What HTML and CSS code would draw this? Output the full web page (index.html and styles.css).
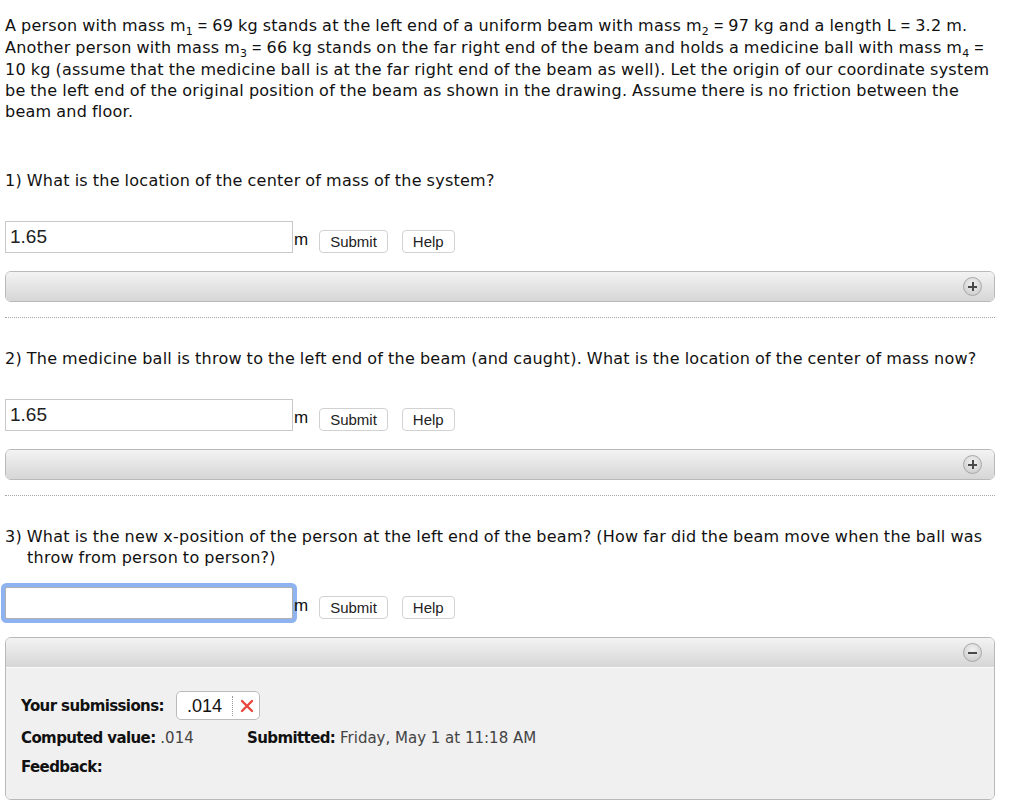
FILE: index.html
```html
<!DOCTYPE html>
<html lang="en">
<head>
    <meta charset="UTF-8">
    <title>Center of Mass Problem</title>
    <link rel="stylesheet" href="styles.css">
</head>
<body>
    <div class="problem">
        <p class="intro">A person with mass m<sub>1</sub> <span class="eq">=</span> 69 kg stands at the left end of a uniform beam with mass m<sub>2</sub> <span class="eq">=</span> 97 kg and a length L <span class="eq">=</span> 3.2 m. Another person with mass m<sub>3</sub> <span class="eq">=</span> 66 kg stands on the far right end of the beam and holds a medicine ball with mass m<sub>4</sub> <span class="eq">=</span> 10 kg (assume that the medicine ball is at the far right end of the beam as well). Let the origin of our coordinate system be the left end of the original position of the beam as shown in the drawing. Assume there is no friction between the beam and floor.</p>

        <div class="question first">
            <p class="q-text">1) What is the location of the center of mass of the system?</p>
            <div class="answer-row">
                <input type="text" class="answer-input" value="1.65">
                <span class="unit">m</span>
                <button class="btn">Submit</button>
                <button class="btn">Help</button>
            </div>
            <div class="panel">
                <div class="panel-head">
                    <span class="toggle plus"></span>
                </div>
            </div>
            <hr class="divider">
        </div>

        <div class="question">
            <p class="q-text">2) The medicine ball is throw to the left end of the beam (and caught). What is the location of the center of mass now?</p>
            <div class="answer-row">
                <input type="text" class="answer-input" value="1.65">
                <span class="unit">m</span>
                <button class="btn">Submit</button>
                <button class="btn">Help</button>
            </div>
            <div class="panel">
                <div class="panel-head">
                    <span class="toggle plus"></span>
                </div>
            </div>
            <hr class="divider">
        </div>

        <div class="question last">
            <p class="q-text">3) What is the new x-position of the person at the left end of the beam? (How far did the beam move when the ball was throw from person to person?)</p>
            <div class="answer-row">
                <input type="text" class="answer-input focused" value="">
                <span class="unit">m</span>
                <button class="btn">Submit</button>
                <button class="btn">Help</button>
            </div>
            <div class="panel open">
                <div class="panel-head">
                    <span class="toggle minus"></span>
                </div>
                <div class="panel-body">
                    <div class="sub-row">
                        <strong>Your submissions:</strong>
                        <span class="sub-box">
                            <span class="sub-val">.014</span>
                            <svg class="sub-x" width="14" height="14" viewBox="0 0 14 14">
                                <path d="M2 2 L12 12 M12 2 L2 12" stroke="#e8453c" stroke-width="2.4" stroke-linecap="round"/>
                            </svg>
                        </span>
                    </div>
                    <div class="info-row">
                        <span class="computed"><strong>Computed value:</strong> .014</span>
                        <span><strong>Submitted:</strong> Friday, May 1 at 11:18 AM</span>
                    </div>
                    <div class="info-row">
                        <strong>Feedback:</strong>
                    </div>
                </div>
            </div>
        </div>
    </div>
</body>
</html>
```

FILE: styles.css
```css
body {
    margin: 0;
    background: #fff;
    color: #111;
    font-family: "DejaVu Sans", Verdana, sans-serif;
    font-size: 16px;
    letter-spacing: 0.25px;
    word-spacing: -0.5px;
}
.problem {
    width: 992px;
    padding: 15px 0 0 5px;
}
.intro {
    margin: 0;
    line-height: 21px;
}
.eq {
    font-family: "Liberation Sans", Arial, sans-serif;
}
sub {
    font-size: 11px;
    vertical-align: sub;
    line-height: 1;
}
.q-text {
    margin: 30px 0 0;
    line-height: 21px;
    padding-left: 22px;
    text-indent: -22px;
}
.question.first .q-text {
    margin-top: 48px;
}
.answer-row {
    display: flex;
    align-items: flex-end;
    margin-top: 30px;
    height: 32px;
    letter-spacing: 0;
    word-spacing: 0;
}
.question.last .answer-row {
    margin-top: 19px;
}
.answer-input {
    box-sizing: border-box;
    width: 288px;
    height: 32px;
    margin: 0;
    padding: 0 4px;
    border: 1px solid #c8c8c8;
    font-family: "Liberation Sans", Arial, sans-serif;
    font-size: 19px;
    color: #222;
    outline: none;
}
.answer-input.focused {
    border: 1px solid #b0b0b0;
    box-shadow: 0 0 0 4px #8fb2f0;
    border-radius: 2px;
}
.unit {
    font-family: "Liberation Sans", Arial, sans-serif;
    font-size: 17px;
    margin-left: 1px;
    line-height: 26px;
}
.btn {
    margin-left: 11px;
    height: 23px;
    padding: 0 10px;
    background: #fff;
    border: 1px solid #d2d2d2;
    border-radius: 4px;
    font-family: "Liberation Sans", Arial, sans-serif;
    font-size: 15px;
    color: #222;
}
.btn + .btn {
    margin-left: 14px;
}
.panel {
    width: 990px;
    box-sizing: border-box;
    margin-top: 18px;
    border: 1px solid #b9b9b9;
    border-radius: 6px;
    overflow: hidden;
}
.panel-head {
    height: 29px;
    display: flex;
    justify-content: flex-end;
    align-items: center;
    padding-right: 12px;
    background: linear-gradient(#f3f3f3, #d6d6d6);
}
.toggle {
    position: relative;
    box-sizing: border-box;
    width: 19px;
    height: 19px;
    border-radius: 50%;
    border: 1px solid #a8a8a8;
    background: radial-gradient(circle at 50% 35%, #f2f2f2, #c6c6c6);
}
.toggle::before,
.toggle.plus::after {
    content: "";
    position: absolute;
    left: 4px;
    top: 7.5px;
    width: 9px;
    height: 2px;
    background: #4a4a4a;
}
.toggle.plus::after {
    left: 7.5px;
    top: 4px;
    width: 2px;
    height: 9px;
}
.divider {
    width: 990px;
    margin: 15px 0 0;
    border: none;
    border-top: 1px dotted #a8a8a8;
}
.panel.open .panel-head {
    border-bottom: 1px solid #fafafa;
}
.panel-body {
    box-sizing: border-box;
    background: #f0f0f0;
    height: 131px;
    padding: 23px 15px 0;
    font-size: 15px;
    letter-spacing: 0;
    word-spacing: 0;
}
.panel-body strong {
    letter-spacing: -0.6px;
    color: #111;
}
.sub-row {
    display: flex;
    align-items: center;
    gap: 12px;
}
.sub-box {
    display: inline-flex;
    align-items: center;
    height: 29px;
    box-sizing: border-box;
    padding: 0 5px 0 10px;
    background: #fff;
    border: 1px solid #bbb;
    border-radius: 5px;
}
.sub-val {
    font-family: "Liberation Sans", Arial, sans-serif;
    font-size: 18px;
    padding-right: 10px;
    border-right: 1px dotted #999;
    line-height: 20px;
}
.sub-x {
    margin-left: 7px;
}
.info-row {
    margin-top: 8px;
    line-height: 21px;
    display: flex;
}
.info-row span {
    color: #444;
}
.computed {
    width: 226px;
}
```
